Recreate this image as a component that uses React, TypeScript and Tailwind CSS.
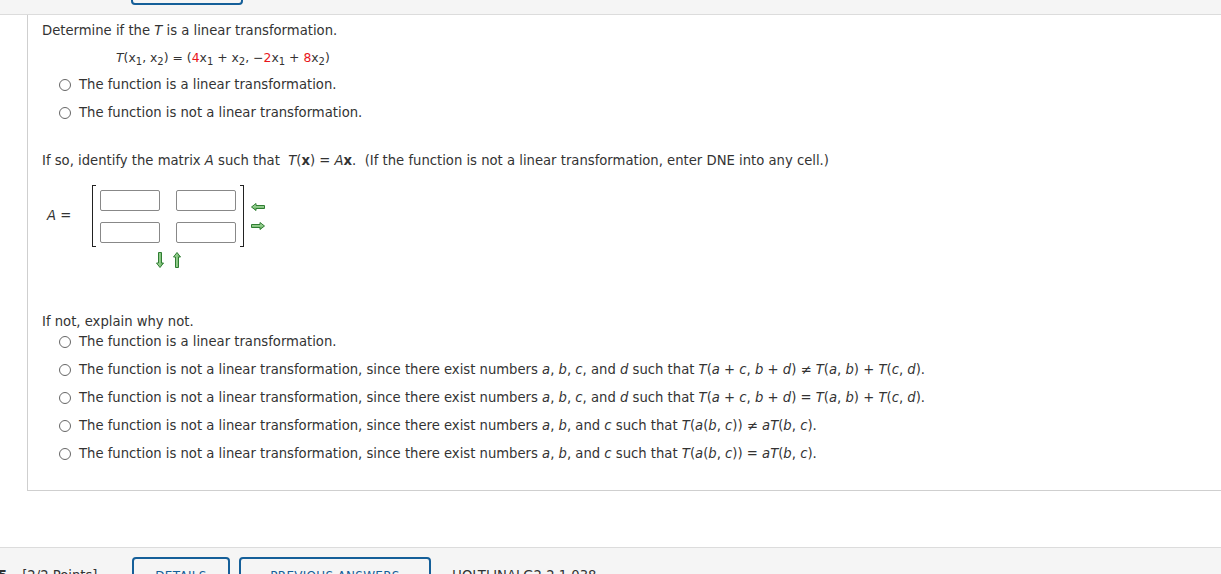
import React from 'react';

function Radio() {
  return <span className="inline-block w-[12px] h-[12px] rounded-full border border-[#666] bg-white shrink-0" />;
}

function Option({ children }: { children: React.ReactNode }) {
  return (
    <div className="h-7 flex items-center gap-2 pl-[17px]">
      <Radio />
      <span>{children}</span>
    </div>
  );
}

function HArrow({ dir }: { dir: 'left' | 'right' }) {
  const d =
    dir === 'left'
      ? 'M0.5 4 L5 0.5 L5 2.5 L13.5 2.5 L13.5 5.5 L5 5.5 L5 7.5 Z'
      : 'M13.5 4 L9 0.5 L9 2.5 L0.5 2.5 L0.5 5.5 L9 5.5 L9 7.5 Z';
  return (
    <svg width="14" height="8" viewBox="0 0 14 8">
      <defs>
        <linearGradient id={'hg' + dir} x1="0" y1="0" x2="0" y2="1">
          <stop offset="0" stopColor="#b9e3b2" />
          <stop offset="1" stopColor="#5fae5a" />
        </linearGradient>
      </defs>
      <path d={d} fill={'url(#hg' + dir + ')'} stroke="#2f7d32" strokeWidth="1" />
    </svg>
  );
}

function VArrow({ dir }: { dir: 'up' | 'down' }) {
  const d =
    dir === 'down'
      ? 'M4 15.5 L0.5 11 L2.5 11 L2.5 0.5 L5.5 0.5 L5.5 11 L7.5 11 Z'
      : 'M4 0.5 L0.5 5 L2.5 5 L2.5 15.5 L5.5 15.5 L5.5 5 L7.5 5 Z';
  return (
    <svg width="8" height="16" viewBox="0 0 8 16">
      <defs>
        <linearGradient id={'vg' + dir} x1="0" y1="0" x2="1" y2="0">
          <stop offset="0" stopColor="#b9e3b2" />
          <stop offset="1" stopColor="#5fae5a" />
        </linearGradient>
      </defs>
      <path d={d} fill={'url(#vg' + dir + ')'} stroke="#2f7d32" strokeWidth="1" />
    </svg>
  );
}

function Cell() {
  return <div className="w-[60px] h-[21px] border border-[#888] rounded-[2px] bg-white" />;
}

export default function App() {
  const red = 'text-[#e8151b]';
  const sub = 'text-[10px]';
  return (
    <div className="w-[1221px] h-[574px] overflow-hidden bg-white text-[#333] text-[13.2px] leading-4 font-['DejaVu_Sans','Verdana',sans-serif]">
      {/* top toolbar */}
      <div className="h-[15px] bg-[#f5f5f5] border-b border-[#dcdcdc] pl-[131px] flex items-end overflow-hidden">
        <div className="w-[112px] h-[34px] shrink-0 mb-[9px] border-2 border-[#155f99] rounded-[4px] bg-[#f5f5f5]" />
      </div>

      <div className="pl-[27px]">
        <div className="border-l border-b border-[#cfcfcf] pl-[14px] pt-[8px] pb-[22px]">
          <p>
            Determine if the <i>T</i> is a linear transformation.
          </p>
          <p className="mt-[11px] pl-[74px] text-[12.4px]">
            <i>T</i>(x<sub className={sub}>1</sub>, x<sub className={sub}>2</sub>) = (
            <span className={red}>4</span>x<sub className={sub}>1</sub> + x<sub className={sub}>2</sub>, −
            <span className={red}>2</span>x<sub className={sub}>1</sub> + <span className={red}>8</span>x
            <sub className={sub}>2</sub>)
          </p>
          <div className="mt-[5px]">
            <Option>The function is a linear transformation.</Option>
            <Option>The function is not a linear transformation.</Option>
          </div>

          <p className="mt-[26px]">
            If so, identify the matrix <i>A</i> such that&nbsp; <i>T</i>(<b>x</b>) = <i>A</i>
            <b>x</b>.&nbsp; (If the function is not a linear transformation, enter DNE into any cell.)
          </p>

          <div className="mt-[16px] flex items-center">
            <span className="w-[50px] pl-[5px]">
              <i>A</i> =
            </span>
            <div className="flex items-center">
              <div className="flex">
                <div className="w-[4px] h-[62px] border-l border-t border-b border-[#222]" />
                <div className="grid grid-cols-2 gap-x-[16px] gap-y-[10px] px-[4px] pt-[5px] pb-[4px]">
                  <Cell />
                  <Cell />
                  <Cell />
                  <Cell />
                </div>
                <div className="w-[4px] h-[62px] border-r border-t border-b border-[#222]" />
              </div>
              <div className="flex flex-col gap-[11px] ml-[7px]">
                <HArrow dir="left" />
                <HArrow dir="right" />
              </div>
            </div>
          </div>
          <div className="flex gap-[9px] pl-[114px] mt-[5px]">
            <VArrow dir="down" />
            <VArrow dir="up" />
          </div>

          <p className="mt-[46px]">If not, explain why not.</p>
          <div className="-mt-[2px]">
            <Option>The function is a linear transformation.</Option>
            <Option>
              The function is not a linear transformation, since there exist numbers <i>a</i>, <i>b</i>, <i>c</i>, and{' '}
              <i>d</i> such that <i>T</i>(<i>a</i> + <i>c</i>, <i>b</i> + <i>d</i>) ≠ <i>T</i>(<i>a</i>, <i>b</i>) +{' '}
              <i>T</i>(<i>c</i>, <i>d</i>).
            </Option>
            <Option>
              The function is not a linear transformation, since there exist numbers <i>a</i>, <i>b</i>, <i>c</i>, and{' '}
              <i>d</i> such that <i>T</i>(<i>a</i> + <i>c</i>, <i>b</i> + <i>d</i>) = <i>T</i>(<i>a</i>, <i>b</i>) +{' '}
              <i>T</i>(<i>c</i>, <i>d</i>).
            </Option>
            <Option>
              The function is not a linear transformation, since there exist numbers <i>a</i>, <i>b</i>, and <i>c</i>{' '}
              such that <i>T</i>(<i>a</i>(<i>b</i>, <i>c</i>)) ≠ <i>aT</i>(<i>b</i>, <i>c</i>).
            </Option>
            <Option>
              The function is not a linear transformation, since there exist numbers <i>a</i>, <i>b</i>, and <i>c</i>{' '}
              such that <i>T</i>(<i>a</i>(<i>b</i>, <i>c</i>)) = <i>aT</i>(<i>b</i>, <i>c</i>).
            </Option>
          </div>
        </div>
      </div>

      {/* next question header */}
      <div className="mt-[56px] bg-[#f5f5f5] border-t border-[#dcdcdc] pt-[9px] flex items-start">
        <div className="h-[38px] flex items-center -ml-[2px] w-[134px]">
          <b className="mr-[10px]">5.</b>
          <span>[2/2 Points]</span>
        </div>
        <div className="h-[38px] w-[98px] border-2 border-[#155f99] rounded-[4px] flex items-center justify-center text-[12px] text-[#155f99] tracking-wide">
          DETAILS
        </div>
        <div className="ml-[9px] h-[38px] w-[192px] border-2 border-[#155f99] rounded-[4px] flex items-center justify-center text-[12px] text-[#155f99] tracking-wide">
          PREVIOUS ANSWERS
        </div>
        <div className="ml-[21px] h-[38px] flex items-center">HOLTLINALG2 2.1.038.</div>
      </div>
    </div>
  );
}
